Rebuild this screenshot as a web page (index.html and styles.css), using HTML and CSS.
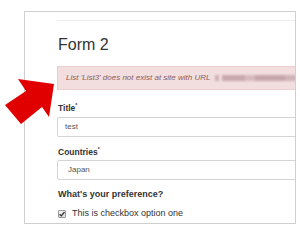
FILE: index.html
```html
<!DOCTYPE html>
<html>
<head>
<meta charset="utf-8">
<link rel="stylesheet" href="styles.css">
</head>
<body>
<div class="frame">
  <div class="content">
    <div class="topline"></div>
    <h2 class="title">Form 2</h2>
    <div class="alert">List 'List3' does not exist at site with URL <span class="redact"></span></div>
    <label class="label lbl-title">Title<sup>*</sup></label>
    <div class="input">test</div>
    <label class="label lbl-countries">Countries<sup>*</sup></label>
    <div class="input select">Japan</div>
    <div class="pref">What's your preference?</div>
    <div class="check-row">
      <span class="checkbox"><svg viewBox="0 0 8 8" width="8" height="8"><path d="M1.6 4.2 L3.3 5.9 L6.5 2" fill="none" stroke="#333" stroke-width="1.3"/></svg></span>
      <span>This is checkbox option one</span>
    </div>
  </div>
</div>
<svg class="arrow" width="60" height="130" viewBox="0 0 60 130">
  <polygon points="18,79 54,84 49,117 42,107 21,124 5,105 26,91" fill="#e10000"/>
</svg>
</body>
</html>
```

FILE: styles.css
```css
html, body {
  margin: 0;
  padding: 0;
  background: #ffffff;
  font-family: "Liberation Sans", Arial, sans-serif;
  color: #333;
}

.frame {
  box-sizing: border-box;
  margin: 11px 0 0 24px;
  width: 272px;
  height: 213px;
  border: 1px solid #cfcfcf;
  overflow: hidden;
  background: #fff;
}

.content {
  padding-left: 32px;
  width: 300px;
}

.topline {
  margin-top: 8px;
  border-top: 1px solid #ececec;
}

.title {
  margin: 15px 0 0 1px;
  font-size: 16px;
  line-height: 18px;
  font-weight: normal;
  color: #333;
}

.alert {
  box-sizing: border-box;
  margin-top: 12px;
  height: 24px;
  border: 1px solid #ebccd1;
  background: #f2dede;
  color: #8a5c60;
  font-style: italic;
  font-size: 8px;
  line-height: 22px;
  padding-left: 8px;
  white-space: nowrap;
}

.redact {
  display: inline-block;
  vertical-align: middle;
  margin-left: 2px;
  width: 90px;
  height: 6px;
  background: linear-gradient(90deg, #cdb0b4 0 4px, transparent 4px 7px, #c9a9ae 7px 30px, #d6babe 30px 40px, #c6a6ab 40px 70px, #d2b4b8 70px 90px);
  filter: blur(0.8px);
}

.label {
  display: block;
  font-weight: bold;
  font-size: 8.5px;
  line-height: 10px;
  margin-left: 1px;
  color: #333;
}

.label sup {
  font-size: 5px;
  line-height: 0;
  vertical-align: 4px;
}

.lbl-title { margin-top: 13px; }
.lbl-countries { margin-top: 10px; }

.input {
  box-sizing: border-box;
  margin-top: 4px;
  height: 20px;
  border: 1px solid #d4d4d4;
  border-radius: 2px;
  background: #fff;
  font-size: 8px;
  line-height: 18px;
  color: #555;
  padding-left: 7px;
}

.select { padding-left: 10px; margin-top: 3px; }

.pref {
  margin-top: 9px;
  margin-left: 1px;
  font-weight: bold;
  font-size: 9px;
  line-height: 11px;
}

.check-row {
  display: flex;
  align-items: center;
  gap: 6px;
  margin-top: 8px;
  margin-left: 1px;
  font-size: 9px;
  line-height: 11px;
}

.checkbox {
  box-sizing: border-box;
  width: 8px;
  height: 8px;
  border: 1px solid #9a9a9a;
  border-radius: 1px;
  background: linear-gradient(#f4f4f4, #dcdcdc);
  display: flex;
  align-items: center;
  justify-content: center;
}

.checkbox svg { display: block; margin: -1px; }

.arrow {
  position: absolute;
  left: 0;
  top: 0;
}
```
